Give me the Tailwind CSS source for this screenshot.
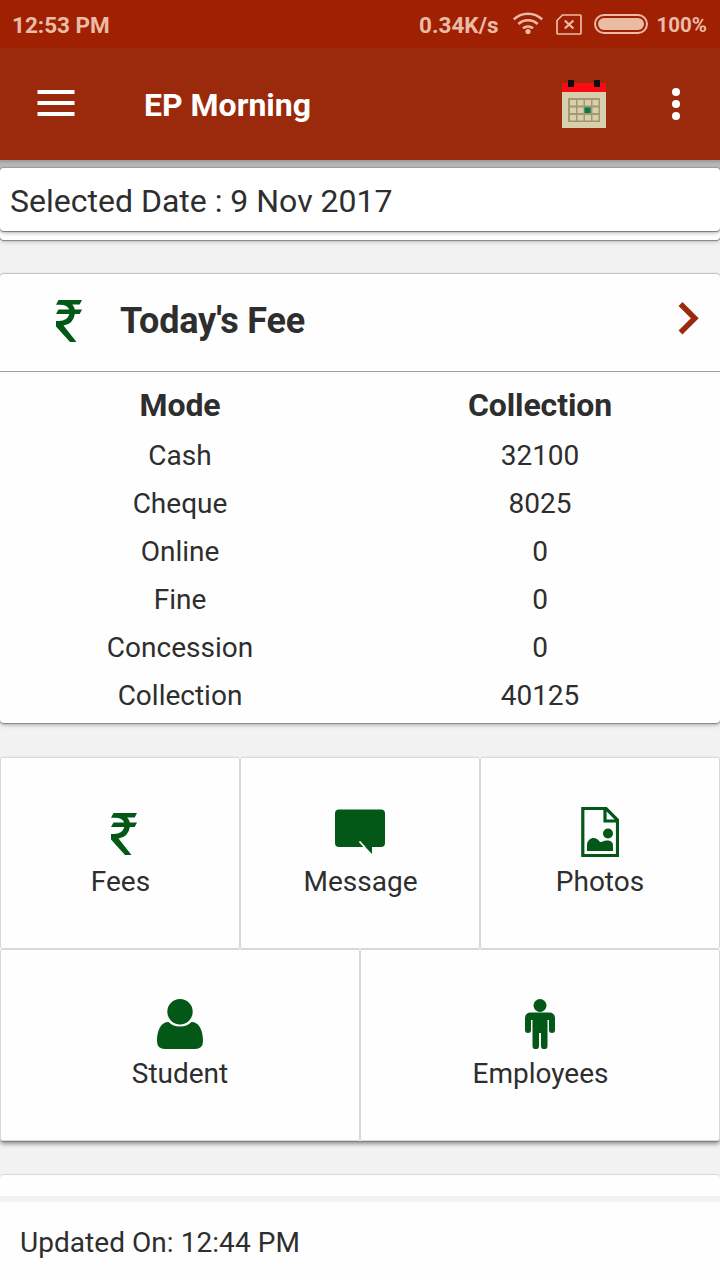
<!DOCTYPE html>
<html lang="en">
<head>
    <meta charset="UTF-8">
    <title>EP Morning</title>
    <script src="https://cdn.jsdelivr.net/npm/@tailwindcss/browser@4"></script>
</head>
<body class="bg-[#f2f2f2] text-[#2e2e2e] font-['Roboto',sans-serif]">
    <div class="w-[720px] h-[1280px] overflow-hidden flex flex-col">
        <!-- Status bar -->
        <div class="h-12 shrink-0 bg-[#a02004] text-[#ebbca4] flex items-center pl-[12px] pr-[13px] pt-[2px] text-[22.5px] font-bold whitespace-nowrap">
            <span class="mt-px">12:53 PM</span>
            <span class="ml-auto mt-px">0.34K/s</span>
            <svg class="ml-[13px] -mt-[4px]" width="32" height="24" viewBox="0 0 32 24" fill="none" stroke="currentColor" stroke-width="2.6">
                <path d="M1.8 8.4a20.5 20.5 0 0 1 28.400 0M6.400 13a14 14 0 0 1 19.200 0M11 17.400a7.500 7.500 0 0 1 10 0"/>
                <circle cx="16" cy="20.500" r="2.600" fill="currentColor" stroke="none"/>
            </svg>
            <svg class="ml-[12px] -mt-px" width="26" height="21" viewBox="0 0 26 21" fill="none" stroke="currentColor" stroke-width="1.700">
                <path d="M6.500 1H24a1 1 0 0 1 1 1v17a1 1 0 0 1-1 1H2a1 1 0 0 1-1-1V6.500z"/>
                <path d="M8.800 6.500l8.600 8M17.400 6.500l-8.600 8" stroke-width="2.200"/>
            </svg>
            <span class="ml-[12px] -mt-[3px] w-[54px] h-5 rounded-full border-2 border-[#ebbca4] p-[2px]"><span class="block h-full rounded-full bg-[#ebbca4]"></span></span>
            <span class="ml-[9px] mt-px text-[20.5px]">100%</span>
        </div>

        <!-- Toolbar -->
        <header class="h-28 shrink-0 bg-[#9b2a0c] text-white flex items-center pl-[37px] pr-[40px]">
            <svg class="-mt-[2px]" width="38" height="28" viewBox="0 0 38 28" fill="currentColor">
                <path d="M.5 1h37v4H.5zM.5 12h37v4H.5zM.5 23h37v4H.5z"/>
            </svg>
            <h1 class="ml-[69px] mt-[2px] text-[32px] font-bold">EP Morning</h1>
            <svg class="ml-auto" width="46" height="48" viewBox="0 0 46 48">
                <path d="M1 12h44v36H1z" fill="#d8cfae"/>
                <path d="M1 3h44v9H1z" fill="#fb0b14"/>
                <path d="M7 0h6v7H7zM33 0h6v7h-6z" fill="#0a0d14"/>
                <path d="M7 18h32v24H7z" fill="#a2976e"/>
                <path d="M9 20h6v5.500H9zM16.500 20h6v5.500h-6zM24 20h6v5.500h-6zM31.500 20h6v5.500h-6zM9 27.500h6V33H9zM16.500 27.500h6V33h-6zM31.500 27.500h6V33h-6zM9 35h6v5.500H9zM16.500 35h6v5.500h-6zM24 35h6v5.500h-6zM31.500 35h6v5.500h-6z" fill="#d8cfae"/>
                <path d="M23.500 27.500h6V33h-6z" fill="#047a4c"/>
            </svg>
            <svg class="ml-[65px]" width="8" height="32" viewBox="0 0 8 32" fill="currentColor">
                <circle cx="4" cy="4" r="4"/><circle cx="4" cy="16" r="4"/><circle cx="4" cy="28" r="4"/>
            </svg>
        </header>

        <!-- Selected date -->
        <div class="shrink-0 pt-2 bg-linear-to-b from-[#999999] from-[0px] via-[#b8b8b8] via-[4px] to-[#b8b8b8] to-[8px]">
            <div class="h-[72px] bg-white rounded-[4px] shadow-[0_1px_1px_#858585,0_2px_4px_#c4c4c4]">
                <div class="h-[63px] bg-white rounded-[4px] shadow-[0_-1px_1px_#999999,0_1px_1px_#777777,0_2px_4px_#b8b8b8] flex items-center pl-[10px] pt-[3px] text-[32px]">Selected Date : 9 Nov 2017</div>
            </div>
        </div>

        <!-- Today's fee -->
        <section class="mt-[34px] h-[449px] shrink-0 bg-[#fefefe] rounded-[4px] shadow-[0_-1px_1px_#c4c4c4,0_1px_1px_#888888,0_2px_4px_#b0b0b0]">
            <div class="h-[98px] border-b border-[#a0a0a0] flex items-center pl-[56px] pr-[21px]">
                <svg class="-mt-[5px] text-[#035818]" width="26" height="43" viewBox="0 0 26 43" fill="currentColor">
                    <path d="M2.500 1H26L23.700 5.500H16.200Q18.200 7.600 18.800 10.500H26L23.700 15H18.800Q17.500 25 7.500 26.500L20.500 43H14L0 27.500V22H3Q11.500 22 13.300 15H0L2.500 10.500H13.200Q11.500 5.800 4 5.800H0Z"/>
                </svg>
                <h2 class="ml-[38px] -mt-[4px] text-[36px] font-bold tracking-[-0.2px]">Today's Fee</h2>
                <svg class="ml-auto -mt-[9px]" width="21" height="34" viewBox="0 0 21 34" fill="none" stroke="#9b2a0c" stroke-width="5.5">
                    <path d="M2.500 3L16.800 17.300L2.500 31.500"/>
                </svg>
            </div>
            <div class="grid grid-cols-2 text-center text-[28px] leading-[48px] pt-[8px]">
                <div class="text-[32px] font-bold leading-[50px] pb-[2px] tracking-[-0.1px]">Mode</div>
                <div class="text-[32px] font-bold leading-[50px] pb-[2px] tracking-[-0.1px]">Collection</div>
                <div>Cash</div>
                <div>32100</div>
                <div>Cheque</div>
                <div>8025</div>
                <div>Online</div>
                <div>0</div>
                <div>Fine</div>
                <div>0</div>
                <div>Concession</div>
                <div>0</div>
                <div>Collection</div>
                <div>40125</div>
            </div>
        </section>

        <!-- Menu tiles -->
        <section class="mt-[34px] h-[384px] shrink-0 bg-[#fefefe] rounded-[4px] text-[28px] leading-8 shadow-[0_1px_1px_#808080,0_3px_4px_#909090]">
            <div class="grid grid-cols-3 h-48">
                <div class="border border-[#d8d8d8] rounded-[2px] flex flex-col items-center pt-[49px]">
                    <div class="h-[59px]">
                        <svg class="mt-[5px] ml-[7px] text-[#035818]" width="26" height="43" viewBox="0 0 26 43" fill="currentColor">
                            <path d="M2.500 1H26L23.700 5.500H16.200Q18.200 7.600 18.800 10.500H26L23.700 15H18.800Q17.500 25 7.500 26.500L20.500 43H14L0 27.500V22H3Q11.500 22 13.300 15H0L2.500 10.500H13.200Q11.500 5.800 4 5.800H0Z"/>
                        </svg>
                    </div>
                    <span class="pl-px">Fees</span>
                </div>
                <div class="border border-[#d8d8d8] rounded-[2px] flex flex-col items-center pt-[49px]">
                    <div class="h-[59px]">
                        <svg class="text-[#035818]" width="50" height="50" viewBox="0 0 50 50" fill="currentColor">
                            <path d="M4 2.500H46Q50 2.500 50 6.500V36Q50 40 46 40H37V47L24.500 34L28.500 40H4Q0 40 0 36V6.500Q0 2.500 4 2.500Z"/>
                            <path d="M24.500 34.500L30 40.500" stroke="#fefefe" stroke-width="1.800"/>
                        </svg>
                    </div>
                    <span class="pl-px">Message</span>
                </div>
                <div class="border border-[#d8d8d8] rounded-[2px] flex flex-col items-center pt-[49px]">
                    <div class="h-[59px]">
                        <svg class="text-[#035818]" width="38" height="50" viewBox="0 0 38 50">
                            <path d="M1.800 1.500H25L36.500 13V48.500H1.800ZM24 1.500V14H36.500" fill="none" stroke="currentColor" stroke-width="3.200"/>
                            <circle cx="27" cy="26.500" r="5" fill="currentColor"/>
                            <path d="M6 44V37.500C7 30 15 28.500 19 35C22 35 22.500 33.500 26 33.500C30 33.500 32 35.500 32 38.500V44Z" fill="currentColor"/>
                        </svg>
                    </div>
                    <span>Photos</span>
                </div>
            </div>
            <div class="grid grid-cols-2 h-48">
                <div class="border border-[#d8d8d8] rounded-[2px] flex flex-col items-center pt-[49px]">
                    <div class="h-[59px]">
                        <svg class="text-[#035818]" width="46" height="50" viewBox="0 0 46 50" fill="currentColor">
                            <circle cx="23" cy="12.700" r="12.700"/>
                            <path d="M11.500 23Q16 27.500 23 27.500T34.500 23C42 23 46 31 46 42Q46 50 38 50H8Q0 50 0 42C0 31 4 23 11.500 23Z"/>
                        </svg>
                    </div>
                    <span>Student</span>
                </div>
                <div class="border border-[#d8d8d8] rounded-[2px] flex flex-col items-center pt-[49px]">
                    <div class="h-[59px]">
                        <svg class="text-[#035818]" width="30" height="50" viewBox="0 0 30 50" fill="currentColor">
                            <circle cx="15" cy="6.500" r="6.500"/>
                            <path d="M6 13.500H24Q30 13.500 30 19.500V31A3 3 0 0 1 24 31V21H22.500V47A3.200 3.200 0 0 1 16 47V34H14V47A3.200 3.200 0 0 1 7.500 47V21H6V31A3 3 0 0 1 0 31V19.500Q0 13.500 6 13.500Z"/>
                        </svg>
                    </div>
                    <span class="pl-px">Employees</span>
                </div>
            </div>
        </section>

        <!-- Next card, cut off by the footer -->
        <div class="mt-[34px] h-[21px] shrink-0 bg-[#fefefe] rounded-t-[4px] shadow-[0_-1px_1px_#d8d8d8]"></div>

        <footer class="mt-auto h-[78px] shrink-0 bg-[#fefefe] flex items-center pl-5 pt-[4px] text-[28px] tracking-[0.05px]">Updated On: 12:44 PM</footer>
    </div>
</body>
</html>
